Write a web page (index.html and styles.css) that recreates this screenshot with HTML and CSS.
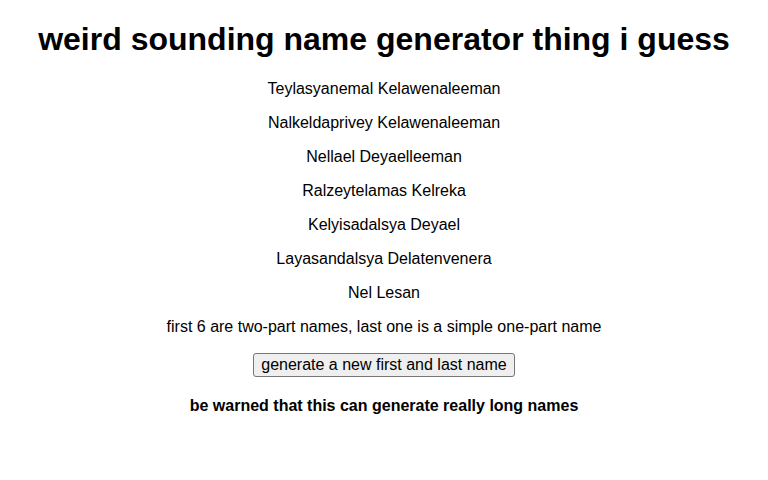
FILE: index.html
```html
<!DOCTYPE html>
<html lang="en">

<head>
    <meta charset="UTF-8">
    <meta name="viewport" content="width=device-width, initial-scale=1.0">
    <title>name generator</title>
    <link rel="stylesheet" href="styles.css">
</head>

<body>
    <h1>weird sounding name generator thing i guess</h1>

    <div id="names">
        <p>Teylasyanemal Kelawenaleeman</p>
        <p>Nalkeldaprivey Kelawenaleeman</p>
        <p>Nellael Deyaelleeman</p>
        <p>Ralzeytelamas Kelreka</p>
        <p>Kelyisadalsya Deyael</p>
        <p>Layasandalsya Delatenvenera</p>
        <p>Nel Lesan</p>
    </div>

    <p>first 6 are two-part names, last one is a simple one-part name</p>

    <button class="gen-btn" id="genBtn">generate a new first and last name</button>

    <h4>be warned that this can generate really long names</h4>
</body>

</html>
```

FILE: styles.css
```css
body {
    margin: 0 8px;
    font-family: 'Liberation Sans', Arial, sans-serif;
    text-align: center;
    color: #000;
    background: #fff;
}

h1 {
    font-size: 32px;
    margin: 21px 0 22px;
}

p {
    font-size: 16px;
}

.gen-btn {
    font-family: 'Liberation Sans', Arial, sans-serif;
    font-size: 16px;
    line-height: 18px;
    margin-top: 1px;
    padding: 2px 7px;
    background-color: #efefef;
    border: 1px solid #767676;
    border-radius: 3px;
    color: #000;
}

h4 {
    font-size: 16px;
    margin: 20px 0;
}
```
